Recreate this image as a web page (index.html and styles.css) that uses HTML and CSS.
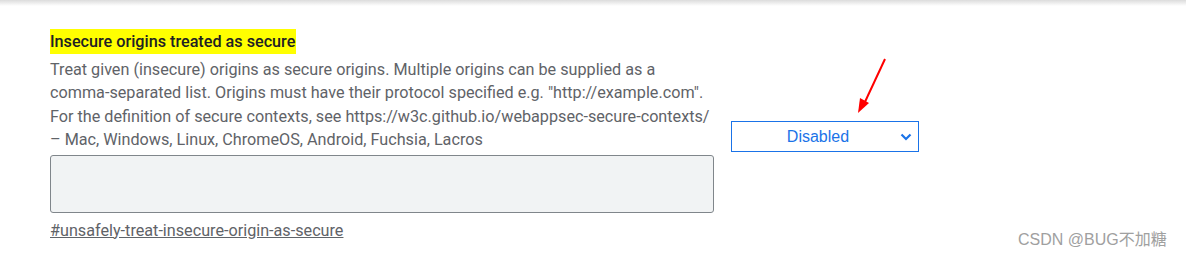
FILE: index.html
```html
<!DOCTYPE html>
<html>
<head>
<meta charset="utf-8">
<link rel="stylesheet" href="styles.css">
</head>
<body>
<div class="topshadow"></div>
<div class="experiment">
  <div class="main">
    <h3 class="title"><span class="hl">Insecure origins treated as secure</span></h3>
    <p class="desc">Treat given (insecure) origins as secure origins. Multiple origins can be supplied as a<br>comma-separated list. Origins must have their protocol specified e.g. "http://example.com".<br>For the definition of secure contexts, see https://w3c.github.io/webappsec-secure-contexts/<br>– Mac, Windows, Linux, ChromeOS, Android, Fuchsia, Lacros</p>
    <div class="textbox"></div>
    <a class="permalink" href="#">#unsafely-treat-insecure-origin-as-secure</a>
  </div>
  <div class="side">
    <div class="select">
      <span class="sel-text">Disabled</span>
      <svg class="chev" width="12" height="8" viewBox="0 0 12 8"><path d="M1.5 1.5 L6 6 L10.5 1.5" fill="none" stroke="#1a73e8" stroke-width="2.2"/></svg>
    </div>
  </div>
</div>
<svg class="arrow" width="40" height="70" viewBox="0 0 40 70">
  <line x1="33" y1="3" x2="12" y2="48" stroke="#f00" stroke-width="2"/>
  <polygon points="6,57 8,42 17,47" fill="#f00"/>
</svg>
<div class="watermark">CSDN @BUG不加糖</div>
</body>
</html>
```
FILE: styles.css
```css
html, body { margin: 0; padding: 0; background: #fff; }
body { width: 1186px; height: 254px; overflow: hidden; position: relative; font-family: Roboto, "Noto Sans", sans-serif; }
.topshadow { height: 6px; background: linear-gradient(#dcdcdc, #fff); }
.experiment { display: flex; padding: 23px 0 0 50px; }
.main { width: 681px; }
.title { margin: 0; font-size: 16.2px; font-weight: 500; line-height: 23px; color: #202124; }
.hl { background: #ffff00; padding: 1px 1px 1px 0; display: inline-block; }
.desc { margin: 4px 0 0; font-size: 16.2px; line-height: 23.4px; color: #5f6368; }
.textbox { width: 662px; height: 56px; margin-top: 3px; background: #f1f3f4; border: 1px solid #80868b; border-radius: 3px; }
.permalink { display: inline-block; margin-top: 8px; font-size: 16.2px; color: #5f6368; text-decoration: underline; }
.side { padding-top: 92px; }
.select { width: 186px; height: 29px; border: 1px solid #1a73e8; display: flex; align-items: center; justify-content: center; position: relative; }
.sel-text { font-family: Arial, "Liberation Sans", sans-serif; font-size: 16px; color: #1a73e8; margin-left: -14px; }
.chev { position: absolute; right: 6px; top: 11px; }
.arrow { position: absolute; left: 852px; top: 56px; }
.watermark { position: absolute; left: 1018px; top: 226px; font-family: "Liberation Sans", "Noto Sans CJK SC", sans-serif; font-size: 16px; color: #a0a0a0; }
```
